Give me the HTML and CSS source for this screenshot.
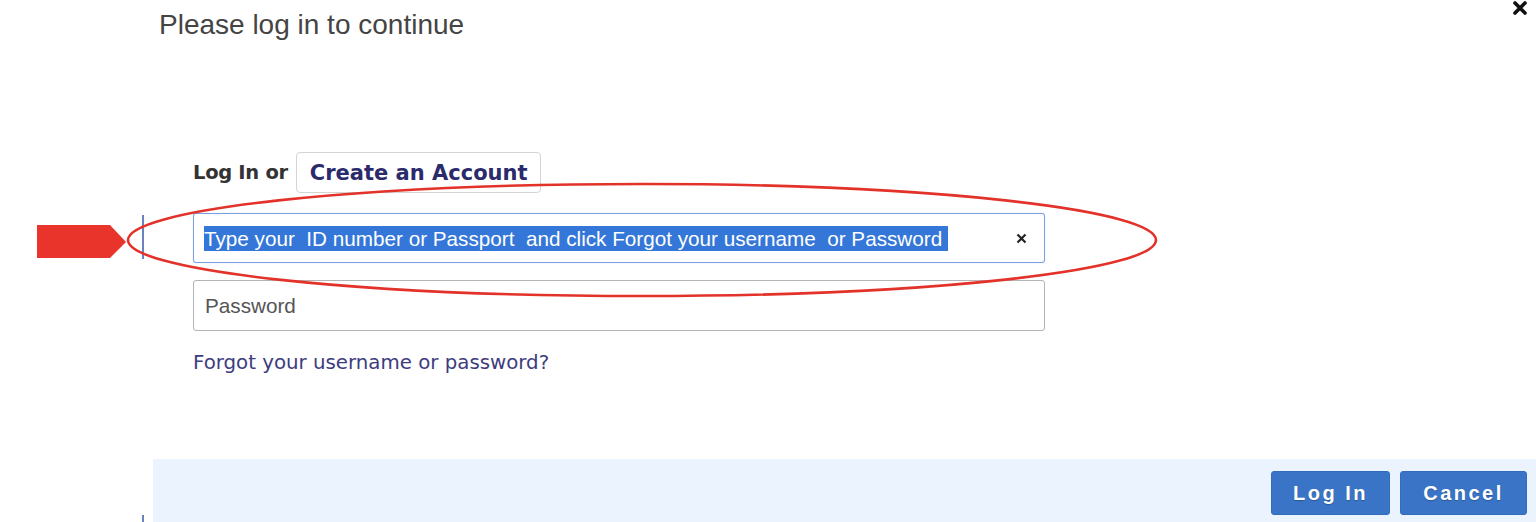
FILE: index.html
```html
<!DOCTYPE html>
<html lang="en">
<head>
<meta charset="utf-8">
<title>Please log in to continue</title>
<link rel="stylesheet" href="styles.css">
</head>
<body>
<div class="page">
  <button class="close" aria-label="Close">
    <svg width="14" height="14" viewBox="0 0 14 14"><path d="M2 2 L12 12 M12 2 L2 12" stroke="#111" stroke-width="3.6" stroke-linecap="round"/></svg>
  </button>
  <div class="dialog">
    <h1 class="title">Please log in to continue</h1>
    <div class="form">
      <div class="tabs">
        <span class="tab-label">Log In or</span>
        <a class="create">Create an Account</a>
      </div>
      <div class="field focused">
        <span class="sel">Type your&nbsp; ID number or Passport&nbsp; and click Forgot your username&nbsp; or Password&nbsp;</span>
        <span class="clear">
          <svg width="11" height="11" viewBox="0 0 11 11"><path d="M1.5 1.5 L9.5 9.5 M9.5 1.5 L1.5 9.5" stroke="#222" stroke-width="2.2"/></svg>
        </span>
      </div>
      <div class="field plain">
        <span class="ph">Password</span>
      </div>
      <a class="forgot">Forgot your username or password?</a>
    </div>
    <div class="footer">
      <button class="btn login">Log In</button>
      <button class="btn cancel">Cancel</button>
    </div>
  </div>
  <svg class="annot" width="1536" height="522" viewBox="0 0 1536 522">
    <line x1="143" y1="215" x2="143" y2="259" stroke="#4464ad" stroke-width="1.6"/>
    <line x1="143" y1="515" x2="143" y2="522" stroke="#4464ad" stroke-width="1.6"/>
    <polygon points="37,225 110,225 126,242 110,258 37,258" fill="#e8342a"/>
    <ellipse cx="642" cy="240" rx="514" ry="56" fill="none" stroke="#e3322a" stroke-width="2.6"/>
  </svg>
</div>
</body>
</html>
```

FILE: styles.css
```css
html, body {
  margin: 0;
  padding: 0;
  background: #ffffff;
}

.page {
  position: relative;
  width: 1536px;
  height: 522px;
  overflow: hidden;
  background: #ffffff;
}

.dialog {
  margin-left: 153px;
  height: 522px;
  display: flex;
  flex-direction: column;
}

.title {
  margin: 0;
  padding: 9px 0 0 6px;
  font-family: "Liberation Sans", Arial, sans-serif;
  font-weight: normal;
  font-size: 28px;
  line-height: 32px;
  color: #444444;
}

.form {
  margin-top: 111px;
  padding-left: 40px;
  width: 852px;
}

.tabs {
  display: flex;
  align-items: center;
  gap: 8px;
  height: 41px;
}

.tab-label {
  font-family: "DejaVu Sans", sans-serif;
  font-weight: bold;
  font-size: 19.5px;
  color: #333333;
  letter-spacing: -0.3px;
}

.create {
  display: flex;
  align-items: center;
  box-sizing: border-box;
  height: 41px;
  padding: 0 12px 0 13px;
  border: 1px solid #d4d4d4;
  border-radius: 4px;
  font-family: "DejaVu Sans", sans-serif;
  font-weight: bold;
  font-size: 21px;
  color: #2a2a6c;
  background: #ffffff;
}

.field {
  box-sizing: border-box;
  display: flex;
  align-items: center;
  border-radius: 3px;
  padding: 0 17px 0 10px;
  font-family: "Liberation Sans", Arial, sans-serif;
  font-size: 20.7px;
  background: #ffffff;
}

.field.focused {
  margin-top: 20px;
  height: 50px;
  border: 1px solid #79a1e2;
  box-shadow: 0 0 1px #a9c3ee;
}

.field.plain {
  margin-top: 17px;
  height: 51px;
  border: 1px solid #b4b4b4;
}

.sel {
  background: #3477d8;
  color: #ffffff;
  line-height: 25px;
  white-space: pre;
}

.clear {
  margin-left: auto;
  display: flex;
  align-items: center;
}

.ph {
  color: #555555;
  padding-left: 1px;
}

.forgot {
  display: block;
  margin-top: 20px;
  font-family: "DejaVu Sans", sans-serif;
  font-size: 19.8px;
  line-height: 24px;
  color: #3d3c7e;
}

.footer {
  margin-top: auto;
  height: 63px;
  box-sizing: border-box;
  background: #ebf3fe;
  display: flex;
  justify-content: flex-end;
  align-items: flex-start;
  gap: 10px;
  padding: 12px 9px 0 0;
}

.btn {
  height: 44px;
  padding: 0;
  border: 1px solid #336bbd;
  border-radius: 3px;
  background: #3a74c6;
  color: #ffffff;
  font-family: "Liberation Sans", Arial, sans-serif;
  font-weight: bold;
  font-size: 20px;
  letter-spacing: 2.5px;
  text-shadow: 0 1px 1px rgba(0, 0, 0, 0.25);
}

.btn.login {
  width: 119px;
}

.btn.cancel {
  width: 127px;
}

.close {
  position: absolute;
  top: 1px;
  right: 9px;
  padding: 0;
  border: 0;
  background: transparent;
  line-height: 0;
}

.annot {
  position: absolute;
  left: 0;
  top: 0;
  pointer-events: none;
}
```
